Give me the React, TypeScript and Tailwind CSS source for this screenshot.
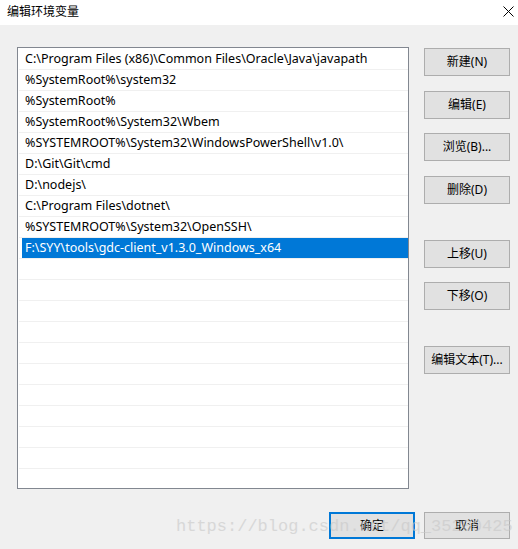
import React from 'react';

const paths = [
  'C:\\Program Files (x86)\\Common Files\\Oracle\\Java\\javapath',
  '%SystemRoot%\\system32',
  '%SystemRoot%',
  '%SystemRoot%\\System32\\Wbem',
  '%SYSTEMROOT%\\System32\\WindowsPowerShell\\v1.0\\',
  'D:\\Git\\Git\\cmd',
  'D:\\nodejs\\',
  'C:\\Program Files\\dotnet\\',
  '%SYSTEMROOT%\\System32\\OpenSSH\\',
  'F:\\SYY\\tools\\gdc-client_v1.3.0_Windows_x64',
];

const selectedIndex = 9;
const rowCount = 21;

const font = { fontFamily: '"Noto Sans", "Noto Sans CJK SC", sans-serif' };

function WinButton({ label, className = '' }: { label: string; className?: string }) {
  return (
    <button
      className={`w-[86px] h-[28px] bg-[#e1e1e1] border border-[#adadad] text-[12px] text-black flex items-center justify-center ${className}`}
    >
      {label}
    </button>
  );
}

export default function App() {
  const rows = Array.from({ length: rowCount }, (_, i) => paths[i] ?? '');

  return (
    <div className="relative w-[518px] h-[549px] bg-[#f0f0f0] flex flex-col overflow-hidden" style={font}>
      {/* Title bar */}
      <div className="h-[25px] bg-white flex items-center justify-between pl-[7px] pr-[4px] pb-[2px] shrink-0">
        <span className="text-[12px] text-black leading-none">编辑环境变量</span>
        <svg width="11" height="11" viewBox="0 0 11 11">
          <path d="M0.5 0.5 L10.5 10.5 M10.5 0.5 L0.5 10.5" stroke="#000" strokeWidth="1" fill="none" />
        </svg>
      </div>

      {/* Body */}
      <div className="flex flex-1 pl-[17px] pt-[22px] pr-[8px]">
        {/* Path list */}
        <div className="w-[392px] h-[442px] bg-white border border-[#828790] p-[1px] pr-0 overflow-hidden">
          {rows.map((text, i) => (
            <div key={i} className="h-[21px] border-b border-[#f0f0f0] flex">
              {i === selectedIndex ? (
                <div className="ml-[3px] flex-1 h-[20px] bg-[#0078d7] text-white text-[12.5px] pl-[3px] flex items-center whitespace-nowrap">
                  {text}
                </div>
              ) : (
                <div className="ml-[6px] flex-1 h-[20px] text-black text-[12.5px] flex items-center whitespace-nowrap">
                  {text}
                </div>
              )}
            </div>
          ))}
        </div>

        {/* Side buttons */}
        <div className="ml-[15px] flex flex-col pt-[1px]">
          <WinButton label="新建(N)" />
          <WinButton label="编辑(E)" className="mt-[15px]" />
          <WinButton label="浏览(B)..." className="mt-[14px]" />
          <WinButton label="删除(D)" className="mt-[15px]" />
          <WinButton label="上移(U)" className="mt-[36px]" />
          <WinButton label="下移(O)" className="mt-[14px]" />
          <WinButton label="编辑文本(T)..." className="mt-[36px]" />
        </div>
      </div>

      {/* Footer buttons */}
      <div className="flex justify-end gap-[9px] pr-[8px] pb-[10px]">
        <button className="w-[86px] h-[27px] bg-[#e1e1e1] border-2 border-[#0078d7] text-[12px] text-black flex items-center justify-center">
          确定
        </button>
        <button className="w-[86px] h-[27px] bg-[#e1e1e1] border border-[#adadad] text-[12px] text-black flex items-center justify-center">
          取消
        </button>
      </div>

      {/* Watermark */}
      <div
        className="absolute left-[176px] top-[514px] text-[17px] text-[#c8c8c8] opacity-60 pointer-events-none whitespace-nowrap"
        style={{ fontFamily: '"Liberation Mono", monospace' }}
      >
        https://blog.csdn.net/qq_35200425
      </div>
    </div>
  );
}
